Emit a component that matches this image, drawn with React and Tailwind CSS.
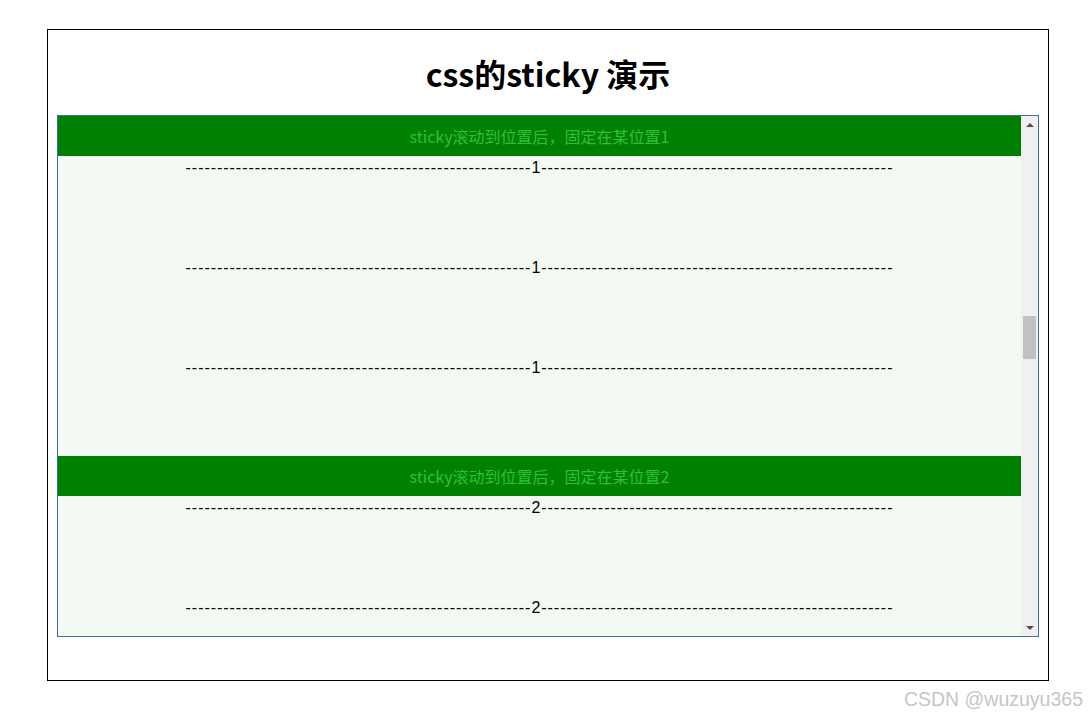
const dashes = "-".repeat(56);

function Row({ n }) {
  return (
    <div className="h-[100px] text-center text-[16px] leading-[24px] tracking-[0.96px] text-black font-['Liberation_Sans',sans-serif]">
      {dashes.slice(1)}
      {n}
      {dashes}
    </div>
  );
}

function Section({ n, rows }) {
  return (
    <div>
      <div className="sticky top-0 h-[40px] bg-[#008000] flex items-center justify-center text-[16px] text-[#2cc03a] font-['Noto_Sans_CJK_SC',sans-serif]">
        sticky滚动到位置后，固定在某位置{n}
      </div>
      {Array.from({ length: rows }, (_, i) => (
        <Row key={i} n={n} />
      ))}
    </div>
  );
}

function Scrollbar() {
  return (
    <div className="w-[17px] shrink-0 bg-[#f0f0f0] flex flex-col">
      <div className="h-[17px] flex items-center justify-center">
        <div className="w-0 h-0 border-l-[4px] border-r-[4px] border-b-[4px] border-l-transparent border-r-transparent border-b-[#505050]" />
      </div>
      <div className="flex-1">
        <div className="mt-[183px] mx-[2px] h-[43px] bg-[#c1c1c1]" />
      </div>
      <div className="h-[17px] flex items-center justify-center">
        <div className="w-0 h-0 border-l-[4px] border-r-[4px] border-t-[4px] border-l-transparent border-r-transparent border-t-[#505050]" />
      </div>
    </div>
  );
}

export default function App() {
  return (
    <div className="relative w-[1088px] h-[717px] bg-white overflow-hidden">
      <div className="ml-[47px] mt-[29px] w-[1002px] h-[652px] border border-black px-[9px]">
        <div className="h-[85px] pt-[20px]">
          <h1 className="text-center text-[32px] leading-[46px] font-bold text-black font-['Noto_Sans_CJK_SC',sans-serif]">
            css的sticky 演示
          </h1>
        </div>
        <div className="h-[522px] border border-[#3c6ea5] flex overflow-hidden">
          <div className="flex-1 bg-[#f3f9f3] overflow-hidden">
            <Section n={1} rows={3} />
            <Section n={2} rows={2} />
          </div>
          <Scrollbar />
        </div>
      </div>
      <div className="absolute right-[5px] bottom-[6px] text-[19.5px] leading-[24px] text-[#c6c6c6] font-['Liberation_Sans',sans-serif]">
        CSDN @wuzuyu365
      </div>
    </div>
  );
}
